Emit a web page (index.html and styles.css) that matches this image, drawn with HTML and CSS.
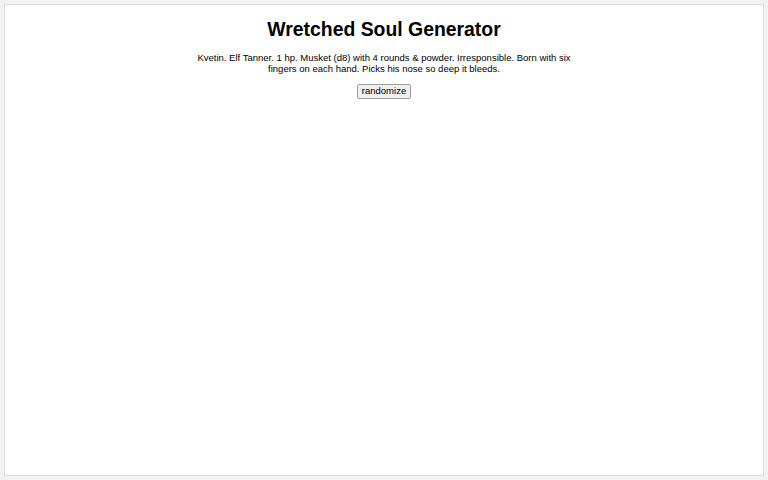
FILE: index.html
```html
<!DOCTYPE html>
<html lang="en">
<head>
<meta charset="utf-8">
<title>Wretched Soul Generator</title>
<link rel="stylesheet" href="styles.css">
</head>
<body>
<main class="sheet">
  <h1 class="title">Wretched Soul Generator</h1>
  <p class="soul">Kvetin. Elf Tanner. 1 hp. Musket (d8) with 4 rounds &amp; powder. Irresponsible. Born with six fingers on each hand. Picks his nose so deep it bleeds.</p>
  <button class="roll" type="button">randomize</button>
</main>
</body>
</html>
```
FILE: styles.css
```css
html, body {
  margin: 0;
  height: 100%;
}

body {
  background: #f2f2f2;
  padding: 4px;
  box-sizing: border-box;
  font-family: "Liberation Sans", Arial, sans-serif;
  color: #000;
}

.sheet {
  box-sizing: border-box;
  height: 472px;
  background: #fff;
  border: 1px solid #dcdcdc;
  display: flex;
  flex-direction: column;
  align-items: center;
  padding-top: 13px;
}

.title {
  margin: 0;
  font-size: 19.4px;
  line-height: 22px;
  font-weight: bold;
}

.soul {
  margin: 12px 0 0;
  max-width: 382px;
  font-size: 9.5px;
  line-height: 11px;
  text-align: center;
}

.roll {
  margin-top: 10px;
  font-family: "Liberation Sans", Arial, sans-serif;
  font-size: 9.5px;
  line-height: 10px;
  padding: 1px 4px 2px;
  background: #efefef;
  border: 1px solid #a0a0a0;
  border-radius: 2px;
  color: #000;
}
```
